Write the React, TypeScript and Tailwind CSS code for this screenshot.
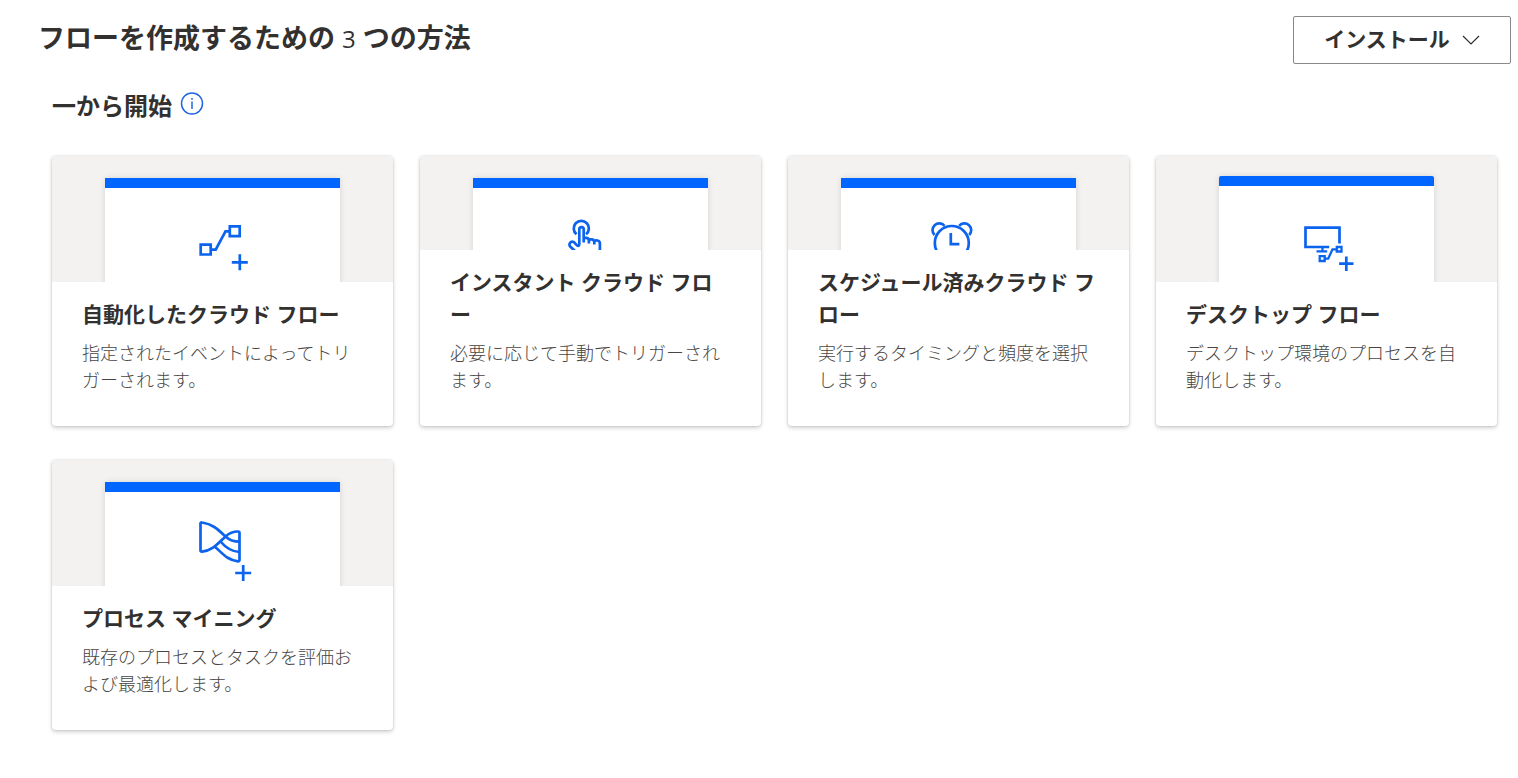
import type { ReactNode } from "react";

type Flow = {
  title: string;
  description: string;
  icon: ReactNode;
  narrow?: boolean;
};

function Glyph({ children }: { children: ReactNode }) {
  return (
    <svg
      className="mx-auto mt-4 block h-20 w-[60px]"
      viewBox="0.5 0 60 80"
      fill="none"
      stroke="#0b63ee"
      strokeWidth="2.7"
      aria-hidden="true"
    >
      {children}
    </svg>
  );
}

function AutomatedIcon() {
  return (
    <Glyph>
      <path d="M8.2 40.7h10v9.8h-10zM37.3 22.3h9.9v9.9h-9.9zM18.2 45.6h5L33 27.3h4.3" />
      <path d="M47.3 50.3v16M39.3 58.3h16" />
    </Glyph>
  );
}

function InstantIcon() {
  return (
    <Glyph>
      <path d="M16 30.3A7.6 7.6 0 1 1 25.6 30.3" />
      <path
        strokeLinejoin="round"
        d="M14.5 47 9.7 42.6c-1.6-2-.4-4.8 2-5 3.4-.2 3.4 4.2 5.800 4.200 1 0 1.300-.8 1.300-2V25.300a2.200 2.200 0 0 1 4.400 0V38.500M23.200 35c.8-1.800 5.200-1.600 5.200 1.500V39.500M28.400 36.500c.8-1.800 5.400-1.600 5.400 1.500V40.500M33.800 37.500c.8-1.800 5.600-1.400 5.600 2V50"
      />
    </Glyph>
  );
}

function ScheduledIcon() {
  return (
    <Glyph>
      <circle cx="23.3" cy="39" r="17" />
      <path d="M6 31A6.8 6.8 0 1 1 16 21.800M30.700 21.800A6.800 6.800 0 1 1 40.700 31M22.300 29v11.200h8.600" />
    </Glyph>
  );
}

function DesktopIcon() {
  return (
    <Glyph>
      <path d="M32.700 45H9V25.700h34v15.800" />
      <path strokeWidth="2.3" d="M26 45v4.300M20 49.300h10.700" />
      <path
        strokeWidth="2.3"
        d="M23.200 54.200h5v4.800h-5zM40.300 45H45v4.500h-4.700zM28.200 56.700h3.500L36 47.300h4.400"
      />
      <path d="M49.800 54.500v14.400M42.600 61.700H57" />
    </Glyph>
  );
}

function MiningIcon() {
  return (
    <Glyph>
      <g strokeLinejoin="round">
        <path d="M8 15.500c0-1 .6-1.200 1.500-1C20 16 25 21 33 28.500c3.500 3.200 8 5.200 14 5.200" />
        <path d="M8 15v27.500c0 1 .6 1.300 1.500 1.100C20 42.500 25 36 33 28.500c4-3.700 8-5 12.500-5 1 0 1.500.4 1.500 1.300V52c0 1-.6 1.400-1.500 1.300C34 52 30 45 22 38.500" />
        <path d="M28 33.500C33 39.500 38 43.500 47 44" />
      </g>
      <path d="M50.700 57v16M42.700 65h16" />
    </Glyph>
  );
}

const flows: Flow[] = [
  {
    title: "自動化したクラウド フロー",
    description: "指定されたイベントによってトリガーされます。",
    icon: <AutomatedIcon />,
  },
  {
    title: "インスタント クラウド フロー",
    description: "必要に応じて手動でトリガーされます。",
    icon: <InstantIcon />,
  },
  {
    title: "スケジュール済みクラウド フロー",
    description: "実行するタイミングと頻度を選択します。",
    icon: <ScheduledIcon />,
  },
  {
    title: "デスクトップ フロー",
    description: "デスクトップ環境のプロセスを自動化します。",
    icon: <DesktopIcon />,
    narrow: true,
  },
  {
    title: "プロセス マイニング",
    description: "既存のプロセスとタスクを評価および最適化します。",
    icon: <MiningIcon />,
  },
];

function FlowCard({ flow }: { flow: Flow }) {
  return (
    <button
      type="button"
      className="flex h-[270px] flex-col overflow-hidden rounded bg-white text-left shadow-[0_0_2px_rgba(0,0,0,0.18),0_2px_4px_rgba(0,0,0,0.18)]"
    >
      {/* the art shrinks when the title takes two lines */}
      <div className={`min-h-0 w-full flex-1 overflow-hidden bg-[#f3f2f1] ${flow.narrow ? "pt-5" : "pt-[22px]"}`}>
        <div
          className={`mx-auto h-36 border-t-10 border-[#0066ff] bg-white shadow-[0_0_6px_rgba(0,0,0,0.12)] ${
            flow.narrow ? "w-[215px] rounded-t-xs" : "w-[235px]"
          }`}
        >
          {flow.icon}
        </div>
      </div>
      <div className="w-full px-[30px] pt-4 pb-8">
        <h3 className="text-[21px] leading-8 font-bold text-[#323130]">{flow.title}</h3>
        <p className="mt-[10px] text-[18px] leading-[27px] font-light text-[#484644]">{flow.description}</p>
      </div>
    </button>
  );
}

export default function App() {
  return (
    <main lang="ja" className="min-h-screen bg-white pb-12 font-['Open_Sans','Noto_Sans_CJK_JP',sans-serif] text-[#323130]">
      <header className="flex items-start justify-between pt-4 pr-[7px] pl-[38px]">
        <h1 className="text-[27px] leading-[44px] font-bold">
          フローを作成するための <span className="text-[24px] font-medium">3</span> つの方法
        </h1>
        <button
          type="button"
          className="flex h-12 w-[218px] items-center justify-center gap-3 rounded-xs border border-[#8a8886] bg-white text-[21px] font-bold"
        >
          インストール
          <svg className="h-4 w-[18px]" viewBox="0 0 18 16" fill="none" stroke="#323130" strokeWidth="1.2" aria-hidden="true">
            <path d="M1 4l8 8 8-8" />
          </svg>
        </button>
      </header>

      <section className="pt-6 pr-[21px] pl-[52px]">
        <div className="flex items-start gap-2">
          <h2 className="text-[24px] leading-9 font-bold">一から開始</h2>
          <button type="button" aria-label="情報" className="mt-1">
            <svg className="h-6 w-6" viewBox="0 0 24 24" fill="none" stroke="#2266e3" strokeWidth="1.5" aria-hidden="true">
              <circle cx="12" cy="11.5" r="10.5" />
              <path d="M12 9.5V17M12 6v1.700" />
            </svg>
          </button>
        </div>
        <div className="mt-8 grid grid-cols-4 gap-x-[27px] gap-y-[34px]">
          {flows.map((flow) => (
            <FlowCard key={flow.title} flow={flow} />
          ))}
        </div>
      </section>
    </main>
  );
}
